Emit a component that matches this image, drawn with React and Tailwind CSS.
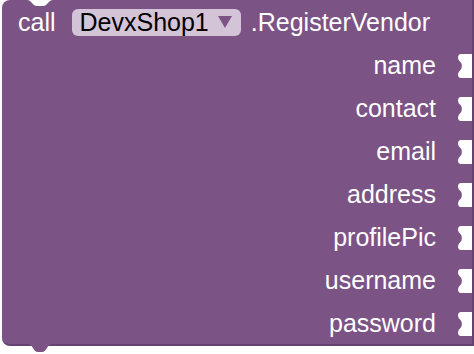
import React from "react";

const inputs = ["name", "contact", "email", "address", "profilePic", "username", "password"];

function Socket() {
  return (
    <svg width="15" height="24" viewBox="0 0 15 24" className="block">
      <path
        d="M4 0 H15 V24 H4 C0.5 24 0 19 3 16.5 C5.5 14.5 5.5 9.5 3 7.5 C0 5 0.5 0 4 0 Z"
        fill="#ffffff"
      />
    </svg>
  );
}

export default function App() {
  return (
    <div
      className="relative w-[474px] h-[354px] bg-white overflow-hidden"
      style={{ fontFamily: '"Liberation Sans", Arial, sans-serif' }}
    >
      <div className="relative ml-[2px] w-[472px] h-[346px] bg-[#7c5385] rounded-tl-[8px] rounded-bl-[8px] border-b-[2px] border-r-[2px] border-[#664270]">
        {/* header */}
        <div className="flex items-center h-[44px] pl-[16px] text-[25px] leading-none text-white">
          <span>call</span>
          <div className="ml-[16px] flex items-center h-[27px] pl-[8px] pr-[9px] rounded-[6px] bg-[#d4c4d8] text-black">
            <span>DevxShop1</span>
            <svg className="ml-[9px]" width="14" height="12" viewBox="0 0 14 12">
              <path d="M0 0 H14 L7 12 Z" fill="#7c5385" />
            </svg>
          </div>
          <span className="ml-[10px]">.RegisterVendor</span>
        </div>
        {/* inputs */}
        <div className="flex flex-col">
          {inputs.map((name) => (
            <div key={name} className="flex items-center justify-end h-[43px]">
              <span className="text-[25px] leading-none text-white">{name}</span>
              <div className="ml-[21px]">
                <Socket />
              </div>
            </div>
          ))}
        </div>
        {/* top notch */}
        <svg className="absolute left-[25px] top-0" width="26" height="7" viewBox="0 0 26 7">
          <path d="M0 0 C5 0 5 6 10 6 H16 C21 6 21 0 26 0 Z" fill="#ffffff" />
        </svg>
        {/* bottom tab */}
        <svg className="absolute left-[26px] top-[344px]" width="24" height="9" viewBox="0 0 24 9">
          <path d="M0 0 C5 0 5 8 10 8 H14 C19 8 19 0 24 0 Z" fill="#7c5385" />
        </svg>
      </div>
    </div>
  );
}
